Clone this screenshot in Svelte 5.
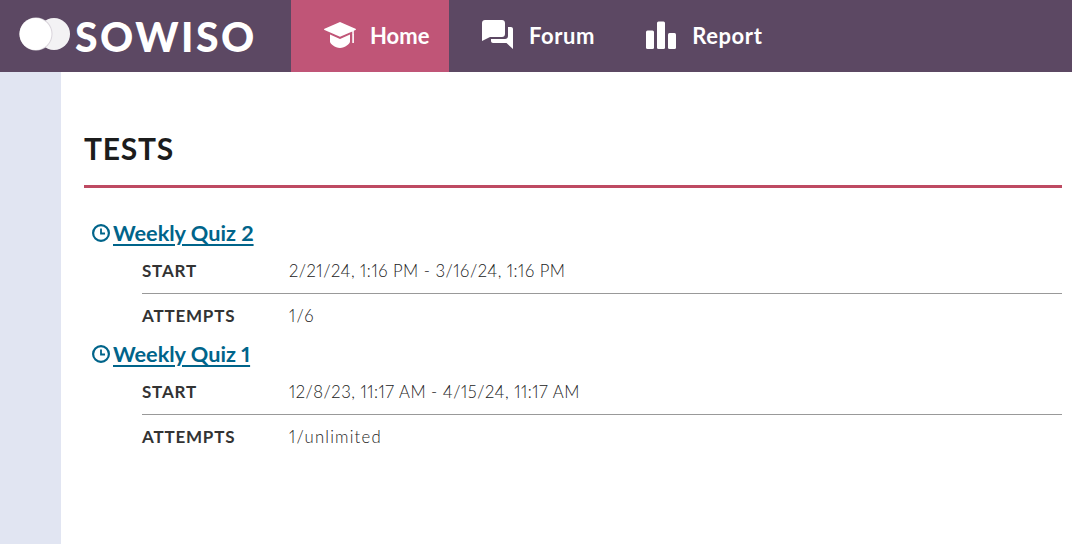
<script>
  const tests = [
    { name: 'Weekly Quiz 2', start: '2/21/24, 1:16 PM - 3/16/24, 1:16 PM', attempts: '1/6' },
    { name: 'Weekly Quiz 1', start: '12/8/23, 11:17 AM - 4/15/24, 11:17 AM', attempts: '1/unlimited' }
  ];
</script>

<div class="page">
  <header class="topbar">
    <div class="logo">
      <svg class="logo-mark" width="52" height="34" viewBox="0 0 52 34">
        <circle cx="35" cy="17" r="16" fill="#fff" opacity="0.93" />
        <circle cx="17" cy="17" r="16.5" fill="#d8d3da" />
        <circle cx="16.5" cy="17" r="16" fill="#fff" />
      </svg>
      <span class="logo-text">SOWISO</span>
    </div>
    <nav class="nav">
      <a class="nav-item active">
        <svg width="34" height="28" viewBox="0 0 34 28" fill="#fff">
          <path d="M17 1 1.500 7.700c-.6.3-.6 1 0 1.300L17 15.800l12.300-5.300v2.700h1.500V9.800l1.700-.8c.6-.3.6-1 0-1.300L17 1z" />
          <path d="M7 13.500v7c0 2.300 5 6.500 10 6.500s10-4.200 10-6.500v-7l-10 4.500-10-4.500z" />
          <rect x="29.300" y="13" width="1.600" height="9" />
        </svg>
        <span>Home</span>
      </a>
      <a class="nav-item spaced">
        <svg width="32" height="30" viewBox="0 0 32 30" fill="#fff">
          <path d="M3 0h17c1.700 0 3 1.300 3 3v11c0 1.700-1.300 3-3 3H8l-8 4V3c0-1.700 1.300-3 3-3z" />
          <path d="M26 7h3c1.100 0 2 .9 2 2v20l-6.500-6H11c-1.100 0-2-.9-2-2v-2h14c1.700 0 3-1.300 3-3V7z" />
        </svg>
        <span>Forum</span>
      </a>
      <a class="nav-item spaced tight">
        <svg width="31" height="28" viewBox="0 0 31 28" fill="#fff">
          <rect x="0" y="9.500" width="8" height="18.500" rx="1.500" />
          <rect x="11" y="0.500" width="8" height="27.500" rx="1.500" />
          <rect x="22" y="12" width="8" height="16" rx="1.500" />
        </svg>
        <span>Report</span>
      </a>
    </nav>
  </header>

  <div class="body">
    <aside class="rail"></aside>
    <main class="content">
      <h1>TESTS</h1>
      <div class="list">
        {#each tests as t}
          <section class="test">
            <div class="title">
              <svg width="18" height="18" viewBox="0 0 18 18" fill="none" stroke="#00648a" stroke-width="2.200">
                <circle cx="9" cy="9" r="7.900" />
                <path d="M9 4.500V9.500H13" stroke-width="1.800" />
              </svg>
              <a class="link">{t.name}</a>
            </div>
            <div class="rows">
              <div class="row ruled"><span class="label">START</span><span class="value">{t.start}</span></div>
              <div class="row"><span class="label">ATTEMPTS</span><span class="value wide">{t.attempts}</span></div>
            </div>
          </section>
        {/each}
      </div>
    </main>
  </div>
</div>

<style>
  :global(body) {
    margin: 0;
    background: #fff;
  }
  .page {
    width: 1072px;
    height: 544px;
    overflow: hidden;
    display: flex;
    flex-direction: column;
    font-family: "Lato", "Liberation Sans", sans-serif;
    font-variant-numeric: proportional-nums;
  }
  .topbar {
    height: 72px;
    background: #5c4863;
    display: flex;
    flex: none;
  }
  .logo {
    width: 291px;
    padding-left: 19px;
    box-sizing: border-box;
    display: flex;
    align-items: center;
    gap: 4px;
  }
  .logo-mark {
    margin-bottom: 4px;
  }
  .logo-text {
    color: #fff;
    font-size: 41px;
    font-weight: 900;
    letter-spacing: 2.500px;
    line-height: 1;
  }
  .nav {
    display: flex;
  }
  .nav-item {
    display: flex;
    align-items: center;
    gap: 15px;
    padding: 0 19px 2px 33px;
    color: #fff;
    font-size: 22px;
    font-weight: 700;
  }
  .nav-item.spaced {
    letter-spacing: 0.600px;
  }
  .nav-item.tight {
    padding-left: 32px;
  }
  .nav-item.active {
    background: #c05577;
    width: 158px;
    box-sizing: border-box;
    gap: 13px;
    padding-left: 32px;
  }
  .body {
    flex: 1;
    display: flex;
  }
  .rail {
    width: 61px;
    background: #e1e5f2;
  }
  .content {
    flex: 1;
    padding: 0 10px 0 23px;
  }
  h1 {
    margin: 0;
    padding: 57px 0 18px;
    height: 38px;
    line-height: 38px;
    font-size: 30px;
    font-weight: 700;
    letter-spacing: 0.800px;
    color: #1c1c1c;
    border-bottom: 3px solid #be4a62;
  }
  .list {
    padding-top: 30px;
  }
  .test {
    margin-bottom: 2px;
  }
  .title {
    display: flex;
    align-items: center;
    gap: 3px;
    padding-left: 8px;
    height: 30px;
  }
  .link {
    color: #00648a;
    font-size: 21.700px;
    font-weight: 700;
    text-decoration: underline;
    text-underline-offset: 3px;
  }
  .rows {
    margin-left: 58px;
  }
  .row {
    display: flex;
    align-items: center;
    height: 43px;
    font-size: 17px;
  }
  .ruled {
    border-bottom: 1px solid #999;
    height: 45px;
  }
  .label {
    width: 147px;
    font-weight: 700;
    color: #333;
    letter-spacing: 0.800px;
  }
  .value {
    color: #222;
    font-weight: 300;
    font-size: 16.700px;
    letter-spacing: 0.500px;
  }
  .value.wide {
    letter-spacing: 1.200px;
  }
</style>
